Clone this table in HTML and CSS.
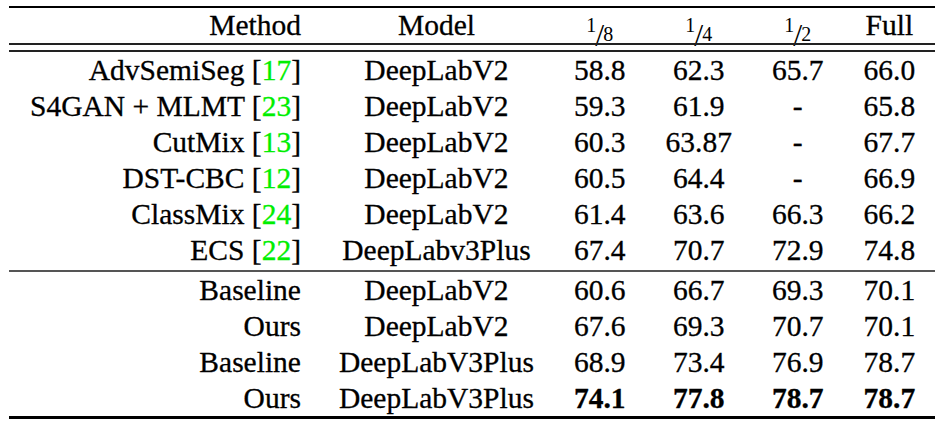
FILE: index.html
```html
<!DOCTYPE html>
<html>
<head>
<meta charset="utf-8">
<link rel="stylesheet" href="styles.css">
</head>
<body>
<div class="tbl">
  <div class="rule rule-top"></div>

  <div class="c l h">Method</div>
  <div class="c h">Model</div>
  <div class="c h"><span class="frac"><span class="num">1</span><span class="sl">/</span><span class="den">8</span></span></div>
  <div class="c h"><span class="frac"><span class="num">1</span><span class="sl">/</span><span class="den">4</span></span></div>
  <div class="c h"><span class="frac"><span class="num">1</span><span class="sl">/</span><span class="den">2</span></span></div>
  <div class="c h">Full</div>

  <div class="rule rule-double"></div>

  <div class="c l">AdvSemiSeg [<span class="cite">17</span>]</div>
  <div class="c">DeepLabV2</div><div class="c">58.8</div><div class="c">62.3</div><div class="c">65.7</div><div class="c">66.0</div>

  <div class="c l">S4GAN + MLMT [<span class="cite">23</span>]</div>
  <div class="c">DeepLabV2</div><div class="c">59.3</div><div class="c">61.9</div><div class="c">-</div><div class="c">65.8</div>

  <div class="c l">CutMix [<span class="cite">13</span>]</div>
  <div class="c">DeepLabV2</div><div class="c">60.3</div><div class="c">63.87</div><div class="c">-</div><div class="c">67.7</div>

  <div class="c l">DST-CBC [<span class="cite">12</span>]</div>
  <div class="c">DeepLabV2</div><div class="c">60.5</div><div class="c">64.4</div><div class="c">-</div><div class="c">66.9</div>

  <div class="c l">ClassMix [<span class="cite">24</span>]</div>
  <div class="c">DeepLabV2</div><div class="c">61.4</div><div class="c">63.6</div><div class="c">66.3</div><div class="c">66.2</div>

  <div class="c l">ECS [<span class="cite">22</span>]</div>
  <div class="c">DeepLabv3Plus</div><div class="c">67.4</div><div class="c">70.7</div><div class="c">72.9</div><div class="c">74.8</div>

  <div class="rule rule-mid"></div>

  <div class="c l">Baseline</div>
  <div class="c">DeepLabV2</div><div class="c">60.6</div><div class="c">66.7</div><div class="c">69.3</div><div class="c">70.1</div>

  <div class="c l">Ours</div>
  <div class="c">DeepLabV2</div><div class="c">67.6</div><div class="c">69.3</div><div class="c">70.7</div><div class="c">70.1</div>

  <div class="c l">Baseline</div>
  <div class="c">DeepLabV3Plus</div><div class="c">68.9</div><div class="c">73.4</div><div class="c">76.9</div><div class="c">78.7</div>

  <div class="c l">Ours</div>
  <div class="c">DeepLabV3Plus</div><div class="c b">74.1</div><div class="c b">77.8</div><div class="c b">78.7</div><div class="c b">78.7</div>

  <div class="rule rule-bottom"></div>
</div>
</body>
</html>
```
FILE: styles.css
```css
html, body {
  margin: 0;
  padding: 0;
  background: #ffffff;
}

body {
  padding: 6px 0 0 9px;
  font-family: "Liberation Serif", "Times New Roman", serif;
  font-size: 29.5px;
  color: #000;
  -webkit-text-stroke: 0.3px #000;
}

.tbl {
  display: grid;
  grid-template-columns: repeat(6, auto);
  width: max-content;
}

.rule {
  grid-column: 1 / -1;
}

.rule-top {
  height: 2px;
  background: #000;
}

.rule-double {
  height: 5px;
  border-top: 2px solid #222;
  border-bottom: 2px solid #222;
}

.rule-mid {
  height: 2px;
  margin-top: 2px;
  background: #555;
}

.rule-bottom {
  height: 3px;
  background: #000;
}

.c {
  padding: 0 20px;
  line-height: 36px;
  height: 36px;
  text-align: center;
  white-space: nowrap;
}

.c.l {
  padding-left: 21px;
  padding-right: 18px;
  text-align: right;
}

.c.h {
  height: 35px;
  line-height: 35px;
}

.cite {
  color: #00ee00;
  -webkit-text-stroke: 0.3px #00ee00;
}

.b {
  font-weight: bold;
}

.frac {
  display: inline-block;
  -webkit-text-stroke: 0;
}

.num {
  font-size: 20px;
  vertical-align: 9px;
}

.sl {
  font-size: 32px;
  display: inline-block;
  vertical-align: -5px;
  margin: 0 -1px;
}

.den {
  font-size: 20px;
}
```
